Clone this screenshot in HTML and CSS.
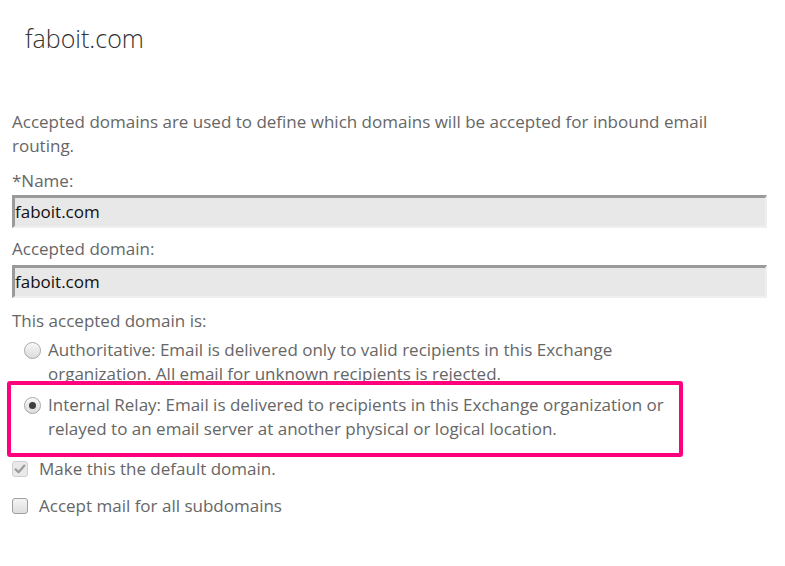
FILE: index.html
```html
<!DOCTYPE html>
<html lang="en">
<head>
<meta charset="utf-8">
<title>faboit.com</title>
<link rel="stylesheet" href="styles.css">
</head>
<body>
<main class="page">
  <h1 class="title">faboit.com</h1>

  <p class="intro">Accepted domains are used to define which domains will be accepted for inbound email routing.</p>

  <div class="field">
    <label class="field-label" for="name">*Name:</label>
    <div class="textbox" id="name">faboit.com</div>
  </div>

  <div class="field">
    <label class="field-label" for="domain">Accepted domain:</label>
    <div class="textbox" id="domain">faboit.com</div>
  </div>

  <div class="field-label kind-label">This accepted domain is:</div>
  <ul class="options">
    <li class="option">
      <span class="radio"></span>
      <span class="option-text">Authoritative: Email is delivered only to valid recipients in this Exchange organization. All email for unknown recipients is rejected.</span>
    </li>
    <li class="option option-highlighted">
      <span class="radio radio-on"></span>
      <span class="option-text">Internal Relay: Email is delivered to recipients in this Exchange organization or relayed to an email server at another physical or logical location.</span>
      <span class="highlight"></span>
    </li>
  </ul>

  <div class="check">
    <span class="box box-disabled">
      <svg viewBox="0 0 16 16" width="16" height="16"><path d="M3.6 8.4 L6.6 11.2 L12.4 4.6" fill="none" stroke="#9a9a9a" stroke-width="2.2" stroke-linecap="round" stroke-linejoin="round"/></svg>
    </span>
    <span class="check-text">Make this the default domain.</span>
  </div>
  <div class="check check-last">
    <span class="box"></span>
    <span class="check-text">Accept mail for all subdomains</span>
  </div>
</main>
</body>
</html>
```

FILE: styles.css
```css
html, body {
  margin: 0;
  padding: 0;
  background: #ffffff;
}

.page {
  padding: 0 18px 0 12px;
  font-family: "Open Sans", "Noto Sans", sans-serif;
  font-size: 17px;
  line-height: 24px;
  color: #666666;
}

.title {
  margin: 0;
  padding: 21px 0 0 13px;
  font-size: 25px;
  font-weight: 300;
  line-height: 34px;
  color: #333333;
}

.intro {
  margin: 55px 0 0;
}

.field {
  margin-top: 11px;
}

.field + .field {
  margin-top: 9px;
}

.field-label {
  display: block;
}

.textbox {
  margin-top: 2px;
  height: 28px;
  box-sizing: content-box;
  border-top: 3px solid #9a9a9a;
  border-left: 3px solid #9a9a9a;
  border-right: 2px solid #efefef;
  border-bottom: 2px solid #efefef;
  background: #e8e8e8;
  color: #111111;
  line-height: 28px;
}

.field + .field .textbox {
  margin-top: 4px;
}

.kind-label {
  margin-top: 11px;
}

.options {
  list-style: none;
  margin: 5px 0 0;
  padding: 0 0 0 12px;
  max-width: 688px;
}

.option {
  position: relative;
  display: flex;
  align-items: flex-start;
  gap: 7px;
}

.option + .option {
  margin-top: 7px;
}

.radio {
  flex: none;
  width: 15px;
  height: 15px;
  margin-top: 4px;
  border: 1px solid #a6a6a6;
  border-radius: 50%;
  background: linear-gradient(#f6f6f6, #dcdcdc);
  box-shadow: inset 0 1px 1px rgba(255, 255, 255, 0.8);
  display: flex;
  align-items: center;
  justify-content: center;
}

.radio-on::after {
  content: "";
  width: 7px;
  height: 7px;
  border-radius: 50%;
  background: #3f3f3f;
}

.highlight {
  position: absolute;
  top: -12px;
  left: -17px;
  width: 676px;
  height: 76px;
  box-sizing: border-box;
  border: 4px solid #ff007f;
  border-radius: 3px;
  pointer-events: none;
}

.check {
  display: flex;
  align-items: flex-start;
  gap: 11px;
  margin-top: 16px;
}

.check-last {
  margin-top: 13px;
}

.box {
  flex: none;
  width: 14px;
  height: 14px;
  margin-top: 4px;
  border: 1px solid #a0a0a0;
  border-radius: 3px;
  background: linear-gradient(#f4f4f4, #dedede);
  position: relative;
}

.box-disabled {
  border-color: #cfcfcf;
  background: #e9e9e9;
}

.box svg {
  position: absolute;
  left: -1px;
  top: -1px;
}
```
